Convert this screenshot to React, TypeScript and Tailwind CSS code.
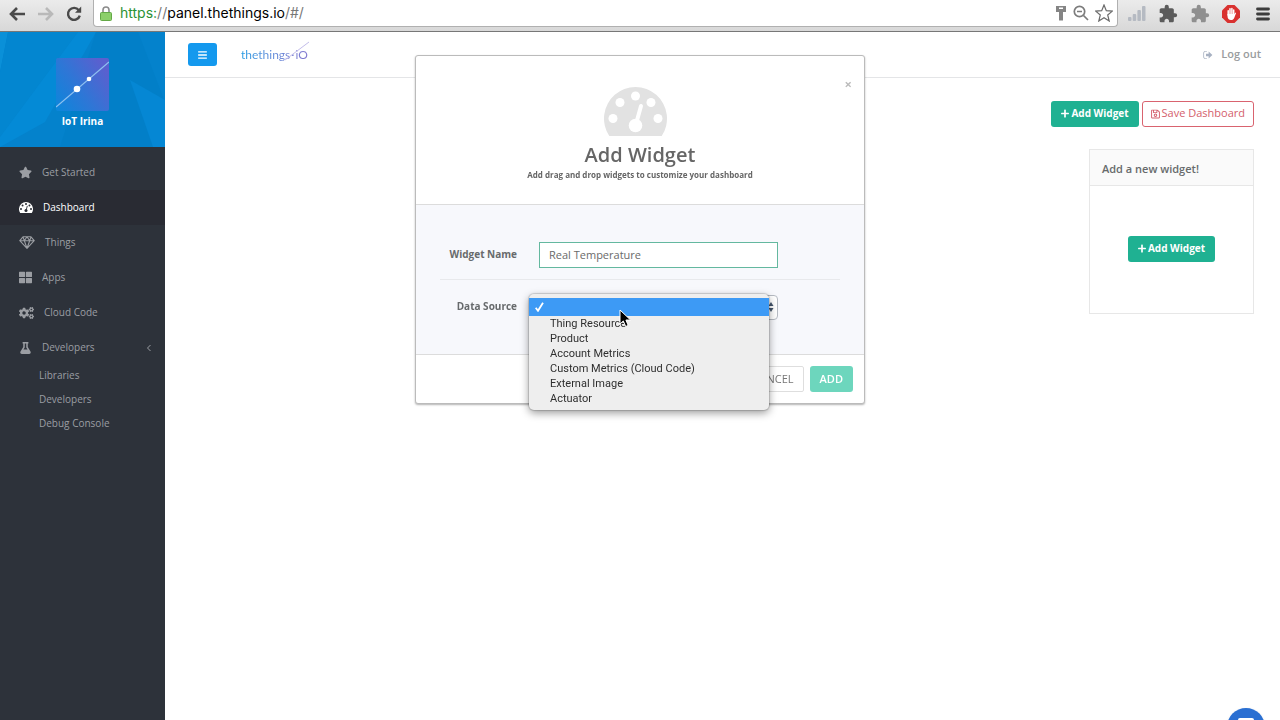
import { useState } from 'react';
import type { ReactNode } from 'react';
import { FaBars, FaCogs, FaFlask, FaPlus, FaRegSave, FaStar, FaThLarge } from 'react-icons/fa';
import { MdExtension } from 'react-icons/md';

const sources = [
  'Thing Resource',
  'Product',
  'Account Metrics',
  'Custom Metrics (Cloud Code)',
  'External Image',
  'Actuator',
];

function Gauge({ className, hole }: { className: string; hole: string }) {
  return (
    <svg viewBox="0 0 63 49" className={className} aria-hidden="true">
      <path d="M5.3 49A31.5 31.5 0 1 1 57.7 49Z" fill="currentColor" />
      <g fill={hole}>
        <circle cx="9" cy="31.5" r="4.5" />
        <circle cx="16" cy="15.5" r="4.5" />
        <circle cx="31.5" cy="9" r="4.5" />
        <circle cx="47" cy="15.5" r="4.5" />
        <circle cx="54" cy="31.5" r="4.5" />
        <circle cx="31.5" cy="38.5" r="6.8" />
      </g>
      <path d="M32 37L37 19" stroke={hole} strokeWidth="4" strokeLinecap="round" />
    </svg>
  );
}

function Diamond() {
  return (
    <svg viewBox="0 0 16 13" className="h-[13px] w-4" fill="none" stroke="currentColor" strokeWidth="1.1" strokeLinejoin="round">
      <path d="M4 0.8h8l3.2 3.900L8 12.300L0.8 4.700zM0.8 4.700h14.400M4 0.800l1.300 3.900L8 12.300l2.700-7.600L12 0.800M5.300 4.700L8 0.800l2.700 3.900" />
    </svg>
  );
}

function BrowserBar() {
  return (
    <div className="flex h-8 shrink-0 items-start border-b border-[#777] bg-gradient-to-b from-[#ebebeb] to-[#d8d8d8] pr-2.5 pl-2">
      <div className="flex h-7 w-[85px] items-center gap-[11px]">
        <button aria-label="Back">
          <svg viewBox="0 0 18 16" className="h-4 w-[18px]" fill="none" stroke="#4a4a4a" strokeWidth="2.6">
            <path d="M17 8H3M9 2L3 8l6 6" />
          </svg>
        </button>
        <button aria-label="Forward">
          <svg viewBox="0 0 18 16" className="h-4 w-[18px]" fill="none" stroke="#b9b9b9" strokeWidth="2.6">
            <path d="M1 8h14M9 2l6 6-6 6" />
          </svg>
        </button>
        <button aria-label="Reload">
          <svg viewBox="0 0 16 16" className="h-4 w-4" fill="none" stroke="#4a4a4a" strokeWidth="2.4">
            <path d="M12.8 4.2A6 6 0 1 0 13.8 9.6" />
            <path d="M15.2 0.6v6.2H9z" fill="#4a4a4a" stroke="none" />
          </svg>
        </button>
      </div>
      <div className="flex h-[27px] flex-1 items-center rounded-b border border-t-0 border-[#b0b0b0] bg-white pr-1 pl-1">
        <svg viewBox="0 0 12 15" className="mr-2 ml-0.5 h-[15px] w-3">
          <path d="M3 7V4a3 3 0 0 1 6 0v3" fill="none" stroke="#8c8c8c" strokeWidth="1.6" />
          <rect x="0.5" y="6.5" width="11" height="8" rx="1" fill="#8ccf6a" stroke="#63a846" />
        </svg>
        <div className="flex-1 pb-px font-[Inter,sans-serif] text-sm text-[#777]">
          <span className="text-[#2a9134]">https:</span>//
          <span className="text-black">panel.thethings.io</span>/#/
        </div>
        <div className="flex items-center gap-1.5">
          <svg viewBox="0 0 12 16" className="h-4 w-3" fill="#858585">
            <path fillRule="evenodd" d="M1 1h10v6H8v8.500H4V7H1zM4 2.500v1.500h4V2.500z" />
          </svg>
          <svg viewBox="0 0 16 16" className="h-4 w-4" fill="none" stroke="#7c7c7c" strokeWidth="1.700">
            <circle cx="6.500" cy="6.500" r="5.200" />
            <path d="M10.500 10.500L15 15M4 6.500h5" />
          </svg>
          <svg viewBox="0 0 18 18" className="h-[18px] w-[18px]" fill="none" stroke="#6b6b6b" strokeWidth="1.200">
            <path d="M9 1l2.300 5.700 6 .4-4.600 3.900 1.500 6L9 13.700 3.800 17l1.500-6L.7 7.100l6-.4z" />
          </svg>
        </div>
      </div>
      <div className="ml-2.5 flex h-7 items-center gap-3">
        <svg viewBox="0 0 18 16" className="h-4 w-[18px]" fill="#b5bac2">
          <rect x="0" y="11" width="3.500" height="4" rx="1" />
          <rect x="4.700" y="8" width="3.500" height="7" rx="1" />
          <rect x="9.400" y="4" width="3.500" height="11" rx="1" />
          <rect x="14" y="0" width="3.500" height="15" rx="1" />
        </svg>
        <MdExtension className="h-5 w-5 text-[#5b5b5b]" />
        <MdExtension className="h-5 w-5 text-[#8f8f8f]" />
        <svg viewBox="0 0 18 18" className="mr-1 h-[18px] w-[18px]">
          <path d="M5.500 0h7L18 5.500v7L12.500 18h-7L0 12.500v-7z" fill="#d9312f" />
          <path
            d="M6.200 10V5.800M8 9V3.800M9.900 9V3.500M11.700 9.500V5"
            stroke="#fff"
            strokeWidth="1.500"
            strokeLinecap="round"
          />
          <path d="M5.500 9h6.700l1.300-1.500.6.600-1.800 4.600c-.6 1.700-1.700 2.300-3.300 2.300-2.200 0-3.500-1.500-3.500-4z" fill="#fff" />
        </svg>
        <svg viewBox="0 0 14 14" className="h-[14px] w-[14px]" stroke="#3d3d3d" strokeWidth="2.800" strokeLinecap="round">
          <path d="M1.500 2h11M1.500 7h11M1.500 12h11" />
        </svg>
      </div>
    </div>
  );
}

function NavItem({ icon, label, active, arrow }: { icon: ReactNode; label: string; active?: boolean; arrow?: boolean }) {
  return (
    <a
      href="#"
      className={`flex h-[35px] items-center gap-2.5 pr-3 pl-[19px] ${
        active ? 'bg-[#292b33] text-white' : 'text-[#9b9ea3]'
      }`}
    >
      {icon}
      <span className="flex-1">{label}</span>
      {arrow && (
        <svg viewBox="0 0 8 8" className="h-2 w-2" fill="none" stroke="currentColor">
          <path d="M5.500 1L2.500 4l3 3" />
        </svg>
      )}
    </a>
  );
}

function Sidebar() {
  return (
    <aside className="w-[165px] shrink-0 bg-[#2d323a] text-[10px]">
      <div className="relative flex h-[115px] flex-col items-center overflow-hidden bg-[#0482cc] pt-[26px]">
        <svg viewBox="0 0 165 115" preserveAspectRatio="none" className="absolute inset-0 h-full w-full">
          <path d="M0 0h8L0 40z" fill="#0a90d8" />
          <path d="M8 0h70L0 105V40z" fill="#0386d0" />
          <path d="M78 0h18L45 90L0 115v-10z" fill="#048ad6" />
          <path d="M96 0h42L165 70v45H60z" fill="#027fc8" />
          <path d="M130 48l35 20v47h-12z" fill="#0587d4" />
        </svg>
        <svg viewBox="0 0 53 53" className="relative h-[53px] w-[53px]">
          <defs>
            <linearGradient id="avatar" x1="0" y1="1" x2="1" y2="0.300">
              <stop offset="0" stopColor="#0a87db" />
              <stop offset="0.500" stopColor="#2f76d6" />
              <stop offset="1" stopColor="#5a60cf" />
            </linearGradient>
          </defs>
          <rect width="53" height="53" rx="2" fill="url(#avatar)" />
          <path d="M0 49L53 4" stroke="#8fc1f0" strokeWidth="1.200" />
          <circle cx="21" cy="31" r="3.300" fill="#fff" />
          <circle cx="33" cy="21" r="2.300" fill="#fff" />
        </svg>
        <p className="relative mt-[3px] font-bold text-white">IoT Irina</p>
      </div>
      <nav className="pt-2">
        <NavItem icon={<FaStar className="h-[13px] w-[13px]" />} label="Get Started" />
        <NavItem icon={<Gauge className="h-[11px] w-[14px]" hole="#292b33" />} label="Dashboard" active />
        <NavItem icon={<Diamond />} label="Things" />
        <NavItem icon={<FaThLarge className="h-[13px] w-[13px]" />} label="Apps" />
        <NavItem icon={<FaCogs className="h-[14px] w-[15px]" />} label="Cloud Code" />
        <NavItem icon={<FaFlask className="h-3 w-[13px]" />} label="Developers" arrow />
        <ul className="-mt-0.5 pl-[39px] text-[#9b9ea3]">
          {['Libraries', 'Developers', 'Debug Console'].map((item) => (
            <li key={item} className="flex h-6 items-center">
              <a href="#">{item}</a>
            </li>
          ))}
        </ul>
      </nav>
    </aside>
  );
}

function AddButton() {
  return (
    <button className="flex h-[26px] items-center gap-0.5 rounded-[3px] bg-[#1fb192] px-2.5 pb-px text-[10px] font-bold text-white">
      <FaPlus className="h-[9px] w-2" />
      Add Widget
    </button>
  );
}

function WidgetModal() {
  const [name, setName] = useState('Real Temperature');
  const [source, setSource] = useState('');

  return (
    <div
      role="dialog"
      aria-labelledby="modal-title"
      className="w-[450px] rounded-[3px] border border-[#bbb] bg-white shadow-[0_1px_2px_rgba(0,0,0,0.3)]"
    >
      <div className="relative flex flex-col items-center border-b border-[#dcdcdc] pt-[31px] pb-[23px]">
        <button aria-label="Close" className="absolute top-5 right-3 text-[13px] leading-4 font-bold text-[#bcbcbc]">
          ×
        </button>
        <Gauge className="-ml-2.5 h-[49px] w-[63px] text-[#e2e2e2]" hole="#fff" />
        <h2 id="modal-title" className="mt-[5px] text-xl leading-7 font-semibold text-[#666]">
          Add Widget
        </h2>
        <p className="text-[8px] leading-3 font-bold text-[#666]">
          Add drag and drop widgets to customize your dashboard
        </p>
      </div>
      <form className="bg-[#f7f8fc] px-6 pt-[37px] pb-[34px]" onSubmit={(e) => e.preventDefault()}>
        <div className="flex items-center gap-[22px] border-b border-[#e8e9ec] pb-[11px]">
          <label htmlFor="widget-name" className="w-[77px] pb-0.5 text-right text-[10px] font-bold whitespace-nowrap text-[#676a6c]">
            Widget Name
          </label>
          <input
            id="widget-name"
            value={name}
            onChange={(e) => setName(e.target.value)}
            className="h-[26px] w-[239px] border border-[#64b89f] bg-white px-[9px] pb-0.5 text-[11px] text-[#6a6a6a] outline-none"
          />
        </div>
        <div className="flex items-center gap-[22px] pt-[15px]">
          <label htmlFor="data-source" className="w-[77px] pb-0.5 text-right text-[10px] font-bold whitespace-nowrap text-[#676a6c]">
            Data Source
          </label>
          <div className="relative">
            <select
              id="data-source"
              value={source}
              onChange={(e) => setSource(e.target.value)}
              className="block h-[25px] w-[239px] appearance-none rounded border border-[#b5bac2] bg-white px-2 text-[11px]"
            >
              <option value="" />
              {sources.map((s) => (
                <option key={s}>{s}</option>
              ))}
            </select>
            <svg viewBox="0 0 8 12" className="absolute top-1.5 right-[3px] h-3 w-2" fill="#44566c">
              <path d="M4 1l2.500 4h-5zM4 11L1.500 7h5z" />
            </svg>
            <ul
              role="listbox"
              aria-label="Data Source"
              className="absolute -top-px -left-2.5 z-10 w-60 rounded-[5px] bg-[#eee] py-1 font-[Roboto,sans-serif] text-[11px] leading-[15px] text-[#2f2f2f] shadow-[0_3px_9px_rgba(0,0,0,0.4),0_0_1px_1px_rgba(0,0,0,0.15)]"
            >
              <li role="option" aria-selected="true" className="flex h-[18px] items-center bg-[#3d9af5] pl-1.5">
                <svg viewBox="0 0 9 10" className="h-2.5 w-[9px]" fill="none" stroke="#fff" strokeWidth="1.800">
                  <path d="M0.700 5.800L3 8.800L8 0.700" />
                </svg>
              </li>
              {sources.map((s) => (
                <li key={s} role="option" aria-selected="false" className="pl-[21px]" onClick={() => setSource(s)}>
                  {s}
                </li>
              ))}
            </ul>
            <svg viewBox="0 0 13 19" className="absolute top-3.5 left-20 z-20 h-[19px] w-[13px]">
              <path
                d="M1 1v14l3.300-3.100L6.700 17.500l2.500-1.100L6.900 11h4.700z"
                fill="#000"
                stroke="#fff"
                strokeWidth="1"
              />
            </svg>
          </div>
        </div>
      </form>
      <div className="flex justify-end gap-1.5 border-t border-[#dcdcdc] px-[11px] py-[11px] text-[11px]">
        <button className="h-[26px] rounded-[2px] border border-[#dedede] bg-white px-[9px] text-[#777]">CANCEL</button>
        <button className="h-[26px] rounded-[3px] bg-[#6dd6bd] px-2.5 font-semibold text-white">ADD</button>
      </div>
    </div>
  );
}

export default function App() {
  return (
    <div className="flex min-h-screen flex-col bg-white font-['Open_Sans',sans-serif]">
      <BrowserBar />
      <div className="flex flex-1">
        <Sidebar />
        <main className="flex-1 text-[11px]">
          <header className="flex h-[46px] items-center border-b border-[#e4e5e7] pr-[19px] pl-[23px]">
            <button aria-label="Menu" className="flex h-[23px] w-[29px] items-center justify-center rounded-[3px] bg-[#1499ee] text-white">
              <FaBars className="h-2.5 w-[9px]" />
            </button>
            <a href="#" className="relative ml-6 font-[Lato,sans-serif] text-xs leading-4">
              <span className="bg-gradient-to-r from-[#1f9be3] to-[#8378cf] bg-clip-text text-transparent">
                thethings<span className="mx-px">·</span>iO
              </span>
              <svg viewBox="0 0 26 20" className="absolute -top-1.5 -right-0.5 h-5 w-[26px]">
                <path d="M1 19L25 1" stroke="#c3bdea" strokeWidth="1" />
              </svg>
            </a>
            <a href="#" className="ml-auto flex items-center gap-2 font-semibold text-[#999c9e]">
              <svg viewBox="0 0 12 10" className="h-2 w-2.5" fill="#a7b1c2">
                <path d="M4.500 0.500H2.500a2 2 0 0 0-2 2v5a2 2 0 0 0 2 2h2" fill="none" stroke="#a7b1c2" />
                <path d="M3.500 3.300h3.300V0.700L11.500 5L6.800 9.300V6.700H3.500z" />
              </svg>
              Log out
            </a>
          </header>
          <div className="flex flex-col items-end pt-[23px] pr-[26px]">
            <div className="flex gap-[3px]">
              <AddButton />
              <button className="flex h-[26px] items-center gap-0.5 rounded-[3px] border border-[#d9636f] bg-white px-2 pb-px text-[#d4606c]">
                <FaRegSave className="h-2.5 w-[9px]" />
                Save Dashboard
              </button>
            </div>
            <section className="mt-[22px] w-[165px] border border-[#e7e7e7]">
              <h3 className="flex h-9 items-center border-b border-[#e7e7e7] bg-[#fafafa] pt-1 pl-3 font-semibold text-[#676a6c]">
                Add a new widget!
              </h3>
              <div className="flex h-[127px] items-center justify-center pb-0.5">
                <AddButton />
              </div>
            </section>
          </div>
        </main>
      </div>
      <div className="pointer-events-none fixed inset-x-0 top-[55px] flex justify-center">
        <div className="pointer-events-auto">
          <WidgetModal />
        </div>
      </div>
      <button
        aria-label="Open chat"
        className="fixed right-[15px] -bottom-[26px] flex h-[38px] w-[38px] justify-center rounded-full bg-[#2a6fd2] pt-2.5 shadow"
      >
        <span className="h-4 w-4 rounded-[2px] bg-white" />
      </button>
    </div>
  );
}
